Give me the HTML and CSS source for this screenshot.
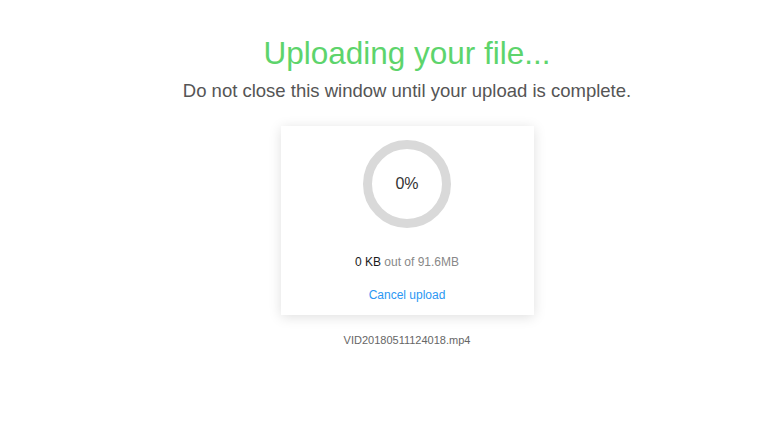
FILE: index.html
```html
<!DOCTYPE html>
<html lang="en">
<head>
<meta charset="utf-8">
<title>Uploading</title>
<link rel="stylesheet" href="styles.css">
</head>
<body>
<main class="page">
  <h1 class="title">Uploading your file...</h1>
  <p class="subtitle">Do not close this window until your upload is complete.</p>
  <section class="card">
    <div class="ring">
      <svg class="ring-svg" width="88" height="88" viewBox="0 0 88 88">
        <circle cx="44" cy="44" r="39.5" fill="none" stroke="#d9d9d9" stroke-width="9"/>
      </svg>
      <span class="percent">0%</span>
    </div>
    <p class="size"><span class="size-done">0 KB</span> out of 91.6MB</p>
    <a class="cancel" href="#">Cancel upload</a>
  </section>
  <p class="filename">VID20180511124018.mp4</p>
</main>
</body>
</html>
```
FILE: styles.css
```css
html, body {
  margin: 0;
  padding: 0;
  background: #ffffff;
}
body {
  font-family: "Liberation Sans", Arial, sans-serif;
}
.page {
  padding-left: 46px;
  padding-top: 35px;
  display: flex;
  flex-direction: column;
  align-items: center;
  text-align: center;
}
.title {
  margin: 0;
  font-size: 31.5px;
  line-height: 36px;
  font-weight: normal;
  color: #5dd46c;
}
.subtitle {
  margin: 9px 0 0;
  font-size: 18.5px;
  line-height: 21px;
  color: #555555;
}
.card {
  margin-top: 25px;
  width: 253px;
  height: 189px;
  box-sizing: border-box;
  padding-top: 14px;
  background: #ffffff;
  box-shadow: 0 2px 12px rgba(0, 0, 0, 0.13);
  display: flex;
  flex-direction: column;
  align-items: center;
}
.ring {
  width: 88px;
  height: 88px;
  display: grid;
  place-items: center;
}
.ring-svg, .percent {
  grid-area: 1 / 1;
}
.percent {
  font-size: 16px;
  color: #333333;
}
.size {
  margin: 27px 0 0;
  font-size: 12px;
  line-height: 14px;
  color: #888888;
}
.size-done {
  color: #1a1a1a;
}
.cancel {
  margin-top: 19px;
  font-size: 12px;
  line-height: 14px;
  color: #2b97f3;
  text-decoration: none;
}
.filename {
  margin: 19px 0 0;
  font-size: 11px;
  line-height: 13px;
  color: #666666;
}
```
